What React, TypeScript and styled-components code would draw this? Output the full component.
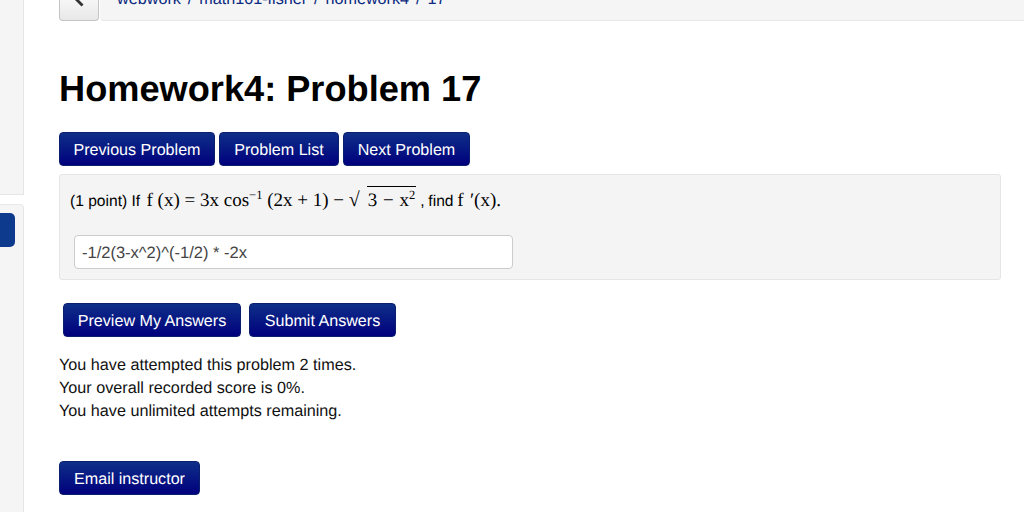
import React from "react";
import styled, { createGlobalStyle } from "styled-components";

const Global = createGlobalStyle`
  html, body { margin: 0; padding: 0; background: #fff; }
  body {
    width: 1024px;
    height: 512px;
    overflow: hidden;
    font-family: "Liberation Sans", Arial, sans-serif;
    color: #000;
    text-rendering: geometricPrecision;
  }
`;

const Page = styled.div`
  display: flex;
  width: 1024px;
  height: 512px;
  overflow: hidden;
`;

const Sidebar = styled.aside`
  width: 24px;
  flex: none;
  display: flex;
  flex-direction: column;
  gap: 9px;
`;

const SideWell = styled.div<{ $h: number; $top?: boolean }>`
  box-sizing: border-box;
  height: ${(p) => p.$h}px;
  background: #f5f5f5;
  border-right: 1px solid #e6e6e6;
  border-bottom: ${(p) => (p.$top ? "1px solid #e6e6e6" : "none")};
  border-top: ${(p) => (p.$top ? "none" : "1px solid #e9e9e9")};
  border-top-right-radius: ${(p) => (p.$top ? 0 : 4)}px;
  padding-top: 8px;
`;

const SideActive = styled.div`
  width: 15px;
  height: 34px;
  background: #0d3a8c;
  border-radius: 0 5px 5px 0;
`;

const Main = styled.main`
  flex: 1;
  min-width: 0;
  padding-left: 35px;
  display: flex;
  flex-direction: column;
`;

const TopBar = styled.div`
  display: flex;
  gap: 1px;
  height: 21px;
`;

const BackButton = styled.div`
  box-sizing: border-box;
  width: 40px;
  height: 21px;
  flex: none;
  background: linear-gradient(#f6f6f6, #e8e8e8);
  border: 1px solid #c4c4c4;
  border-top: none;
  border-radius: 0 0 4px 4px;
  overflow: hidden;
  svg { display: block; margin-left: 13px; }
`;

const Crumbs = styled.nav`
  flex: 1;
  box-sizing: border-box;
  height: 21px;
  padding-left: 17px;
  background: #f5f5f5;
  border-bottom: 1px solid #e8e8e8;
  border-bottom-left-radius: 4px;
  display: flex;
  align-items: flex-end;
  overflow: hidden;
  font-size: 16.2px;
  line-height: 20px;
  color: #0b2a80;
  white-space: pre;
  word-spacing: 2.4px;
`;

const CrumbTrail = styled.span`
  display: block;
  margin-bottom: 11px;
`;

const Title = styled.h1`
  margin: 44px 0 0;
  font-size: 36.2px;
  line-height: 48px;
  font-weight: 700;
  color: #000;
`;

const ButtonRow = styled.div<{ $indent?: number; $gap: number; $mt: number }>`
  display: flex;
  gap: ${(p) => p.$gap}px;
  margin-top: ${(p) => p.$mt}px;
  margin-left: ${(p) => p.$indent ?? 0}px;
`;

const Button = styled.button<{ $w: number }>`
  box-sizing: border-box;
  width: ${(p) => p.$w}px;
  height: 34px;
  padding: 2px 0 0;
  border: 1px solid #0a1f6e;
  border-radius: 4px;
  background: linear-gradient(#0e2f88, #00007d);
  color: #fff;
  font-family: "Liberation Sans", Arial, sans-serif;
  font-size: 16.1px;
  text-align: center;
  text-rendering: geometricPrecision;
`;

const ProblemCard = styled.section`
  box-sizing: border-box;
  width: 942px;
  height: 106px;
  margin-top: 8px;
  padding: 14px 0 0 10px;
  background: #f4f4f4;
  border: 1px solid #e5e5e5;
  border-radius: 3px;
`;

const Statement = styled.div`
  height: 22px;
  font-size: 15.6px;
  line-height: 22px;
  white-space: pre;
`;

const Tail = styled.span`
  word-spacing: -0.5px;
`;

const Formula = styled.span<{ $ml?: number; $ws?: number }>`
  font-family: "Liberation Serif", "Times New Roman", serif;
  font-size: 19px;
  white-space: pre;
  margin-left: ${(p) => p.$ml ?? 0}px;
  word-spacing: ${(p) => p.$ws ?? 0}px;
`;

const Power = styled.sup`
  font-size: 12.5px;
  line-height: 0;
`;

const RadicalSign = styled.span`
  margin: 0 7px 0 0;
  font-size: 20px;
`;

const Radicand = styled.span`
  border-top: 1px solid #000;
  padding: 3px 1px 0 1px;
  margin-right: 4px;
  line-height: 19px;
  word-spacing: 1px;
`;

const AnswerInput = styled.input`
  display: block;
  box-sizing: border-box;
  width: 439px;
  height: 34px;
  margin: 24px 0 0 4px;
  padding: 2px 7px 0;
  background: #fff;
  border: 1px solid #cccccc;
  border-radius: 4px;
  font-family: "Liberation Sans", Arial, sans-serif;
  font-size: 16.5px;
  color: #444;
  text-rendering: geometricPrecision;
`;

const Status = styled.div`
  margin-top: 17px;
  font-size: 16.2px;
  line-height: 23px;
  color: #111;
`;

const StatusLine = styled.div``;

export default function App() {
  return (
    <Page>
      <Global />
      <Sidebar>
        <SideWell $h={195} $top />
        <SideWell $h={308}>
          <SideActive />
        </SideWell>
      </Sidebar>
      <Main>
        <TopBar>
          <BackButton>
            <svg width="14" height="8" viewBox="0 0 14 8" fill="none">
              <path d="M1 -3 L9.5 5.5" stroke="#333" strokeWidth="2.8" />
            </svg>
          </BackButton>
          <Crumbs>
            <CrumbTrail>webwork / math101-fisher / homework4 / 17</CrumbTrail>
          </Crumbs>
        </TopBar>
        <Title>Homework4: Problem 17</Title>
        <ButtonRow $gap={4} $mt={19}>
          <Button $w={156}>Previous Problem</Button>
          <Button $w={120}>Problem List</Button>
          <Button $w={127}>Next Problem</Button>
        </ButtonRow>
        <ProblemCard>
          <Statement>
            {"(1 point) If "}
            <Formula $ml={2}>
              f (x) = 3x cos<Power>−1</Power> (2x + 1) − <RadicalSign>√</RadicalSign>
              <Radicand>
                3 − x<Power>2</Power>
              </Radicand>
            </Formula>
            <Tail>{", find "}</Tail>
            <Formula $ws={1.5}>f ′(x).</Formula>
          </Statement>
          <AnswerInput readOnly value="-1/2(3-x^2)^(-1/2) * -2x" />
        </ProblemCard>
        <ButtonRow $indent={4} $gap={8} $mt={23}>
          <Button $w={178}>Preview My Answers</Button>
          <Button $w={147}>Submit Answers</Button>
        </ButtonRow>
        <Status>
          <StatusLine>You have attempted this problem 2 times.</StatusLine>
          <StatusLine>Your overall recorded score is 0%.</StatusLine>
          <StatusLine>You have unlimited attempts remaining.</StatusLine>
        </Status>
        <ButtonRow $gap={0} $mt={38}>
          <Button $w={141}>Email instructor</Button>
        </ButtonRow>
      </Main>
    </Page>
  );
}
